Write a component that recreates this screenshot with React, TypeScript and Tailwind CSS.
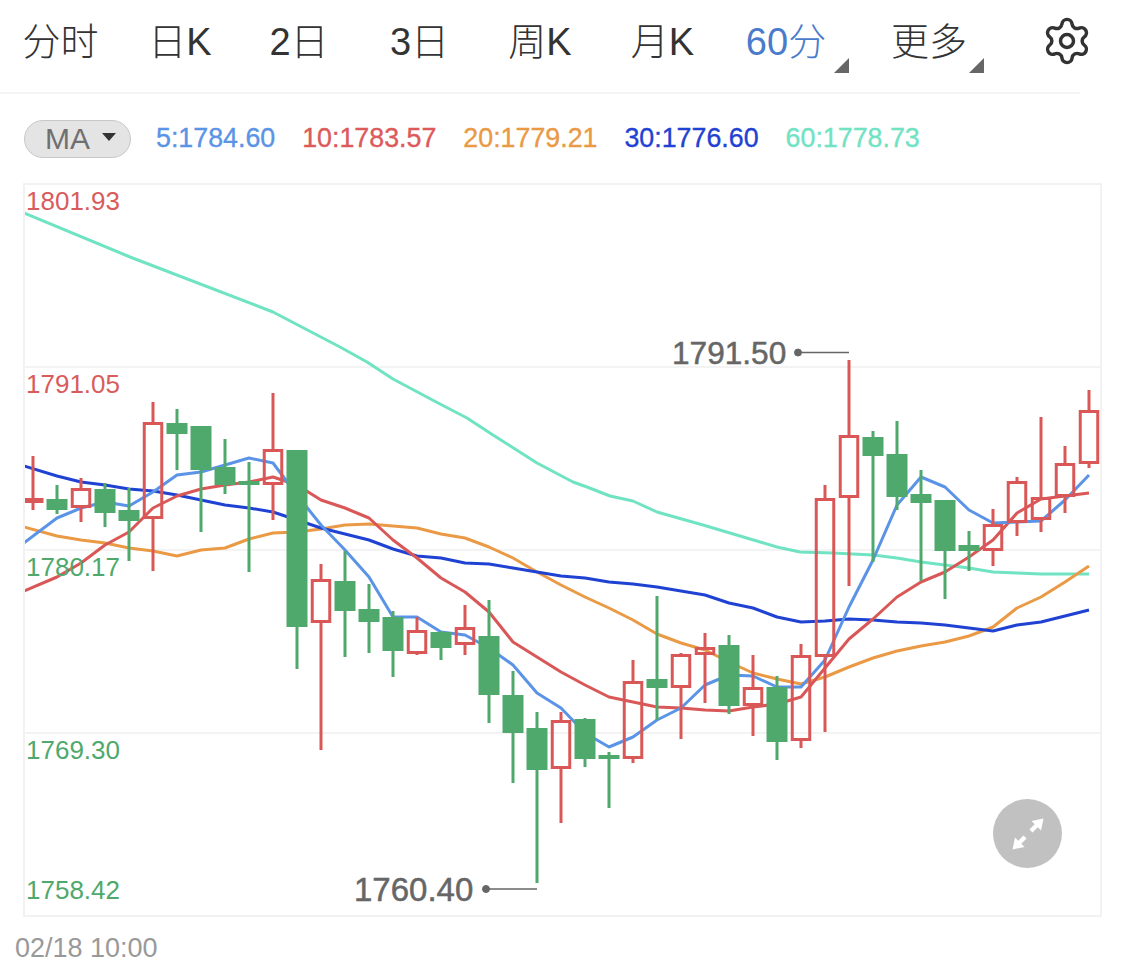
import { Settings } from 'lucide-react';

type Candle = [x: number, top: number, bottom: number, open: number, close: number, up: boolean];

const TABS = ['分时', '日K', '2日', '3日', '周K', '月K', '60分', '更多'];

const LEGEND = [
  { label: '5:1784.60', color: 'text-[#5b94e6]' },
  { label: '10:1783.57', color: 'text-[#dc5a5a]' },
  { label: '20:1779.21', color: 'text-[#ea9a45]' },
  { label: '30:1776.60', color: 'text-[#1f42d2]' },
  { label: '60:1778.73', color: 'text-[#70e3c3]' },
];

const AXIS = [
  { label: '1801.93', className: 'h-[183px] text-[#d85c5c]' },
  { label: '1791.05', className: 'h-[183px] text-[#d85c5c]' },
  { label: '1780.17', className: 'h-[183px] text-[#4fa96c]' },
  { label: '1769.30', className: 'h-[140px] text-[#4fa96c]' },
  { label: '1758.42', className: 'h-[32px] text-[#4fa96c]' },
];

const CANDLES: Candle[] = [
  [33, 456, 510, 498, 503, true],
  [57, 485, 514, 499, 510, false],
  [81, 478, 522, 488, 508, true],
  [105, 483, 527, 489, 513, false],
  [129, 488, 561, 510, 521, false],
  [153, 402, 571, 422, 519, true],
  [177, 409, 470, 423, 434, false],
  [201, 426, 532, 426, 470, false],
  [225, 439, 494, 467, 485, false],
  [249, 462, 572, 481, 485, false],
  [273, 393, 520, 449, 485, true],
  [297, 450, 669, 450, 627, false],
  [321, 564, 750, 579, 623, true],
  [345, 551, 657, 581, 611, false],
  [369, 584, 653, 609, 622, false],
  [393, 611, 677, 617, 651, false],
  [417, 617, 655, 630, 654, true],
  [441, 631, 660, 632, 648, false],
  [465, 605, 655, 627, 645, true],
  [489, 600, 723, 636, 695, false],
  [513, 671, 783, 695, 733, false],
  [537, 712, 883, 728, 770, false],
  [561, 712, 823, 720, 769, true],
  [585, 718, 767, 719, 759, false],
  [609, 752, 808, 755, 759, false],
  [633, 660, 763, 681, 759, true],
  [657, 596, 720, 679, 688, false],
  [681, 653, 739, 654, 688, true],
  [705, 633, 703, 647, 655, true],
  [729, 635, 714, 645, 706, false],
  [753, 655, 736, 687, 706, true],
  [777, 676, 760, 687, 742, false],
  [801, 644, 748, 655, 741, true],
  [825, 485, 732, 498, 657, true],
  [849, 360, 586, 435, 498, true],
  [873, 431, 562, 437, 456, false],
  [897, 421, 510, 454, 497, false],
  [921, 470, 581, 494, 503, false],
  [945, 500, 599, 500, 551, false],
  [969, 531, 571, 545, 551, false],
  [993, 509, 566, 524, 551, true],
  [1017, 477, 536, 481, 523, true],
  [1041, 417, 532, 497, 520, true],
  [1065, 446, 513, 463, 497, true],
  [1089, 390, 468, 410, 464, true],
];

const MA5 =
  '24,543 57,518 81,508 105,502 129,506 153,492 177,475 201,472 225,465 249,458 273,463 297,495 321,525 345,550 369,577 393,617 417,617 441,632 465,635 489,648 513,665 537,693 561,708 585,733 609,747 633,737 657,720 681,708 705,685 729,675 753,676 777,687 801,687 825,660 849,607 873,560 897,505 921,477 945,487 969,510 993,523 1017,522 1041,521 1065,500 1089,475';
const MA10 =
  '24,591 57,577 81,563 105,545 129,532 153,508 177,496 201,489 225,485 249,482 273,477 297,485 321,500 345,508 369,518 393,540 417,558 441,578 465,592 489,612 513,642 537,657 561,672 585,685 609,697 633,702 657,707 681,708 705,710 729,711 753,707 777,704 801,697 825,668 849,639 873,619 897,597 921,582 945,572 969,557 993,540 1017,513 1041,499 1065,496 1089,493';
const MA20 =
  '24,527 57,536 81,540 105,543 129,548 153,551 177,556 201,550 225,548 249,539 273,533 297,532 321,529 345,525 369,524 393,526 417,528 441,534 465,538 489,547 513,558 537,572 561,585 585,597 609,608 633,620 657,634 681,643 705,650 729,662 753,673 777,679 801,684 825,677 849,667 873,658 897,651 921,646 945,642 969,636 993,627 1017,608 1041,597 1065,582 1089,566';
const MA30 =
  '24,466 57,476 81,482 105,485 129,489 153,491 177,495 201,500 225,505 249,508 273,512 297,520 321,528 345,534 369,540 393,549 417,556 441,558 465,563 489,564 513,568 537,572 561,576 585,578 609,582 633,584 657,587 681,591 705,595 729,603 753,608 777,617 801,622 825,621 849,619 873,620 897,622 921,623 945,625 969,628 993,631 1017,625 1041,622 1065,616 1089,610';
const MA60 =
  '24,213 130,257 273,312 340,347 367,362 393,379 440,404 467,418 493,435 537,463 573,482 587,487 610,496 633,501 657,512 703,525 777,547 800,552 833,553 873,555 897,558 921,562 945,565 969,568 993,572 1017,573 1041,574 1089,574';

const GREEN = '#4fa96c';
const RED = '#da5757';

function CandleMark({ c }: { c: Candle }) {
  const [x, top, bottom, open, close, up] = c;
  const color = up ? RED : GREEN;
  const thin = close - open < 7;
  return (
    <g>
      <path d={`M${x} ${top}V${open}M${x} ${close}V${bottom}`} stroke={color} strokeWidth={3} fill="none" />
      {up && !thin ? (
        <rect x={x - 8.75} y={open + 1.5} width={17.5} height={close - open - 3} fill="none" stroke={color} strokeWidth={3} />
      ) : (
        <rect x={x - 10.5} y={open} width={21} height={close - open} fill={color} />
      )}
    </g>
  );
}

export default function App() {
  return (
    <div className="relative h-[974px] w-[1125px] overflow-hidden bg-white font-['Liberation_Sans','Noto_Sans_CJK_SC',sans-serif]">
      {/* Period Tabs */}
      <div className="flex h-[94px] w-[1080px] items-start border-b-2 border-[#f4f4f4]">
        <div className="grid w-[1011px] shrink-0 grid-cols-[121px_118px_120px_121px_120px_125px_122px_164px]">
          {TABS.map((tab) => (
            <div
              key={tab}
              className={`relative text-center text-[38px] font-light leading-[84px] ${tab === '60分' ? 'text-[#4a7bcb]' : 'text-[#333333]'}`}
            >
              {tab}
              {(tab === '60分' || tab === '更多') && (
                <span
                  className={`absolute top-[58px] h-[15px] w-[15px] bg-[#666666] [clip-path:polygon(100%_0,100%_100%,0_100%)] ${tab === '60分' ? 'right-[-2px]' : 'right-[27px]'}`}
                />
              )}
            </div>
          ))}
        </div>
        <Settings className="ml-[30px] mt-[15px] h-[52px] w-[52px] shrink-0 text-[#333333]" strokeWidth={1.6} />
      </div>

      {/* MA Legend */}
      <div className="flex h-[89px] items-center pl-[24px]">
        <div className="flex h-[38px] w-[107px] items-center gap-[12px] rounded-full border border-[#c8c8c8] bg-[#e4e4e4] pl-[20px]">
          <span className="text-[30px] text-[#707070]">MA</span>
          <span className="mb-[3px] h-0 w-0 border-x-[7px] border-t-[8px] border-x-transparent border-t-[#333333]" />
        </div>
        <div className="ml-[25px] flex gap-[27px] text-[26.8px] [-webkit-text-stroke-width:0.35px]">
          {LEGEND.map((item) => (
            <span key={item.label} className={item.color}>
              {item.label}
            </span>
          ))}
        </div>
      </div>

      {/* Chart */}
      <div className="relative ml-[23px] h-[734px] w-[1079px] border-2 border-[#f2f2f2]">
        <svg width={1075} height={730} viewBox="25 185 1075 730" className="block">
          <path d="M25 367H1100M25 550H1100M25 733H1100" stroke="#f3f3f3" strokeWidth={2} />
          <g fill="none" strokeWidth={3} strokeLinejoin="round">
            <polyline points={MA60} stroke="#70e3c3" />
            <polyline points={MA20} stroke="#ea9a45" />
            <polyline points={MA30} stroke="#1f42d2" />
            <polyline points={MA10} stroke={RED} />
            <polyline points={MA5} stroke="#5b94e6" />
          </g>
          {CANDLES.map((c) => (
            <CandleMark key={c[0]} c={c} />
          ))}
          <g fill="#666666" stroke="#666666">
            <path d="M798 352.500H849M486 889H537" strokeWidth={1.5} fill="none" />
            <circle cx={798} cy={352.5} r={3.5} />
            <circle cx={486} cy={889} r={3.5} />
          </g>
        </svg>

        <div className="absolute left-px top-0 flex flex-col text-[26px] leading-[32px]">
          {AXIS.map((tick) => (
            <span key={tick.label} className={tick.className}>
              {tick.label}
            </span>
          ))}
        </div>

        <span className="absolute left-[647px] top-[149px] text-[31.6px] leading-[38px] text-[#666666] [-webkit-text-stroke:0.5px_#666666]">1791.50</span>
        <span className="absolute left-[329px] top-[686px] text-[33px] leading-[38px] text-[#666666] [-webkit-text-stroke:0.5px_#666666]">1760.40</span>

        <button className="absolute right-[38px] bottom-[47px] flex h-[69px] w-[69px] items-center justify-center rounded-full bg-[#c1c1c1]">
          <svg width={36} height={36} viewBox="0 0 36 36" fill="white">
            <path d="M33.500 2.500L31 14.500L27.800 11.300L22.500 16.600L19.400 13.500L24.700 8.200L21.500 5Z" />
            <path d="M2.500 33.500L5 21.500L8.200 24.700L13.500 19.400L16.600 22.500L11.300 27.800L14.500 31Z" />
          </svg>
        </button>
      </div>

      <div className="pl-[15px] pt-[16px] text-[27px] leading-[30px] text-[#999999]">02/18 10:00</div>
    </div>
  );
}
